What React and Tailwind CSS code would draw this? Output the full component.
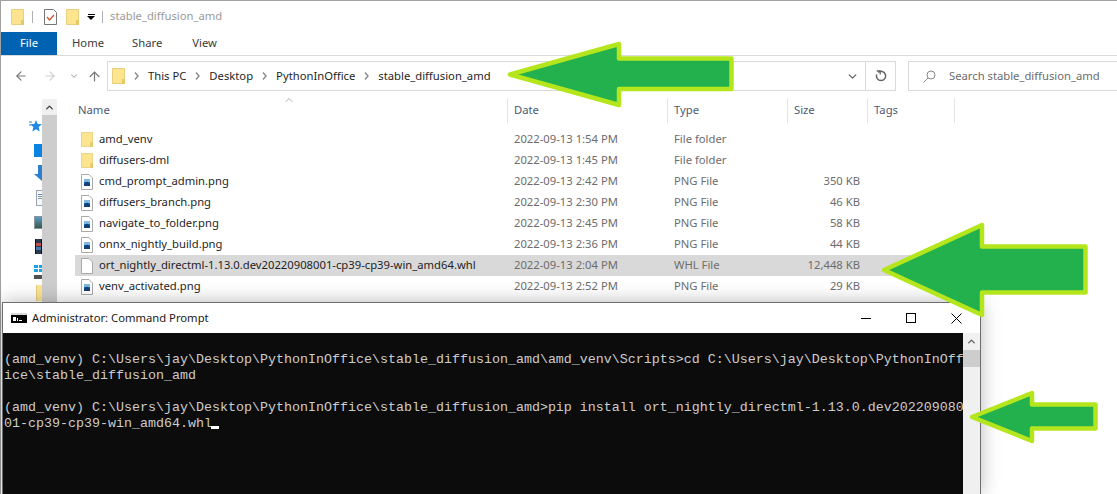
import React from 'react';
import { ArrowLeft, ArrowRight, ArrowUp, ChevronDown, ChevronUp } from 'lucide-react';

const FILES = [
  { name: 'amd_venv', date: '2022-09-13 1:54 PM', type: 'File folder', size: '', icon: 'folder' },
  { name: 'diffusers-dml', date: '2022-09-13 1:45 PM', type: 'File folder', size: '', icon: 'folder' },
  { name: 'cmd_prompt_admin.png', date: '2022-09-13 2:42 PM', type: 'PNG File', size: '350 KB', icon: 'png' },
  { name: 'diffusers_branch.png', date: '2022-09-13 2:30 PM', type: 'PNG File', size: '46 KB', icon: 'png' },
  { name: 'navigate_to_folder.png', date: '2022-09-13 2:45 PM', type: 'PNG File', size: '58 KB', icon: 'png' },
  { name: 'onnx_nightly_build.png', date: '2022-09-13 2:36 PM', type: 'PNG File', size: '44 KB', icon: 'png' },
  { name: 'ort_nightly_directml-1.13.0.dev20220908001-cp39-cp39-win_amd64.whl', date: '2022-09-13 2:04 PM', type: 'WHL File', size: '12,448 KB', icon: 'blank', selected: true },
  { name: 'venv_activated.png', date: '2022-09-13 2:52 PM', type: 'PNG File', size: '29 KB', icon: 'png' },
];

const CONSOLE = [
  ' ',
  '(amd_venv) C:\\Users\\jay\\Desktop\\PythonInOffice\\stable_diffusion_amd\\amd_venv\\Scripts>cd C:\\Users\\jay\\Desktop\\PythonInOff',
  'ice\\stable_diffusion_amd',
  ' ',
  '(amd_venv) C:\\Users\\jay\\Desktop\\PythonInOffice\\stable_diffusion_amd>pip install ort_nightly_directml-1.13.0.dev202209080',
];

function FolderIcon({ className = 'w-[13px] h-[16px]' }) {
  return (
    <svg viewBox="0 0 13 16" className={`block shrink-0 ${className}`}>
      <path d="M.5.5h12v15H.5z" fill="#fde58f" stroke="#e8cf80" />
      <path d="M10 11h3v5h-3z" fill="#e8c765" />
    </svg>
  );
}

function FileIcon({ image }) {
  return (
    <svg viewBox="0 0 12 16" className="block shrink-0 w-[12px] h-[16px]">
      <path d="M.5.5h7.5l3.5 3.5v11.500h-11z" fill="#fff" stroke="#a9a9a9" />
      {image && <path d="M3 5h6v7H3z" fill="#1565a8" />}
      {image && <path d="M3 5h6v3H3z" fill="#7fb8e0" />}
      {image && <path d="M3 10l3-2.500 3 2.500v2H3z" fill="#123f78" />}
    </svg>
  );
}

function Chevron() {
  return (
    <svg viewBox="0 0 5 8" className="block w-[5px] h-[8px] shrink-0">
      <path d="M1 .5l3 3.500-3 3.500" fill="none" stroke="#8a8a8a" strokeWidth="1.400" />
    </svg>
  );
}

function Arrow({ box, points, className, width, height }) {
  return (
    <svg viewBox={box} width={width} height={height} className={`absolute block ${className}`}>
      <polygon points={points} fill="#22b14c" stroke="#b5e61d" strokeWidth="4.500" strokeLinejoin="round" />
    </svg>
  );
}

function NavPane() {
  return (
    <div className="w-[56px] flex justify-end pt-[8px] shrink-0">
      <div className="w-[13px] h-[204px] overflow-hidden relative">
        <div className="flex flex-col items-end">
          <svg viewBox="0 0 14 14" className="block w-[14px] h-[14px] mt-[20px]">
            <path d="M8 1l1.600 4 4.400.300-3.400 2.800 1.100 4.400L8 10.200l-3.700 2.300 1.100-4.400L2 5.300l4.400-.300z" fill="#1e88e5" />
            <path d="M0 3h4M0 6h3" stroke="#1e88e5" />
          </svg>
          <div className="w-[8px] h-[13px] mt-[11px] bg-[#0a84e0]" />
          <svg viewBox="0 0 8 16" className="block w-[8px] h-[16px] mt-[8px]">
            <path d="M4 0h4v16L0 9h4z" fill="#2a7fd0" />
          </svg>
          <div className="w-[6px] h-[16px] mt-[9px] bg-[#f4f6fa] border border-[#9aa4b0] border-r-0 flex flex-col gap-px pt-[3px] pl-px">
            <div className="h-px bg-[#5a8fd0]" />
            <div className="h-px bg-[#8a96a4]" />
            <div className="h-px bg-[#8a96a4]" />
          </div>
          <div className="w-[8px] h-[13px] mt-[10px] border border-[#8a949c] border-r-0 bg-gradient-to-b from-[#5a9ac8] to-[#3a5a4a]" />
          <div className="w-[7px] h-[15px] mt-[10px] bg-[#2a3a4a] border-x border-[#111] flex flex-col justify-center gap-px">
            <div className="h-[3px] bg-[#c05050]" />
            <div className="h-[3px] bg-[#4a78b0]" />
          </div>
          <div className="w-[8px] mt-[11px] flex flex-col gap-[3px]">
            <div className="grid grid-cols-2 gap-px">
              <div className="h-[3px] bg-[#19a4ea]" />
              <div className="h-[3px] bg-[#19a4ea]" />
              <div className="h-[3px] bg-[#19a4ea]" />
              <div className="h-[3px] bg-[#19a4ea]" />
            </div>
            <div className="h-[4px] bg-[#505050]" />
          </div>
          <div className="w-[6px] h-[16px] mt-[6px] bg-[#fde58f] border-l border-[#e8cf80]" />
        </div>
      </div>
      <div className="w-[15px] flex flex-col shrink-0">
        <div className="h-[16px] bg-[#f0f0f0] flex items-center justify-center">
          <ChevronUp size={11} strokeWidth={3} color="#404040" />
        </div>
        <div className="flex-1 bg-[#cdcdcd]" />
      </div>
    </div>
  );
}

function FileList() {
  const header = 'h-[25px] flex items-center pl-[6px] border-l border-[#e5e5e5] text-[#4c5a74]';
  return (
    <div className="flex-1 pt-[7px] pl-[18px] min-w-0">
      <div className="grid grid-cols-[432px_160px_120px_80px_88px] w-[880px] text-[11.25px]">
        <div className="h-[25px] flex items-center pl-[3px] text-[#4c5a74] relative">
          Name
          <ChevronUp size={12} strokeWidth={1} color="#555" className="absolute left-[208px] -top-[4px]" />
        </div>
        <div className={header}>Date</div>
        <div className={header}>Type</div>
        <div className={header}>Size</div>
        <div className={`${header} border-r`}>Tags</div>
      </div>
      <div className="mt-[6px] w-[880px]">
        {FILES.map((f) => (
          <div
            key={f.name}
            className={`grid grid-cols-[432px_160px_120px_73px_95px] h-[21px] items-center text-[11.25px] whitespace-nowrap ${f.selected ? 'bg-[#d9d9d9]' : ''}`}
          >
            <div className="flex items-center pl-[6px] gap-[6px] text-[#1f1f1f]">
              {f.icon === 'folder' ? <FolderIcon className="w-[12px] h-[15px]" /> : <FileIcon image={f.icon === 'png'} />}
              <span>{f.name}</span>
            </div>
            <div className="pl-[7px] text-[#6d6d6d]">{f.date}</div>
            <div className="pl-[7px] text-[#6d6d6d]">{f.type}</div>
            <div className="text-right text-[#6d6d6d]">{f.size}</div>
            <div />
          </div>
        ))}
      </div>
    </div>
  );
}

function CommandPrompt() {
  return (
    <div className="absolute left-[2px] top-[302px] w-[979px] h-[192px] bg-white border border-b-0 border-[#6e6e6e] shadow-[0_0_18px_rgba(0,0,0,0.28)] flex flex-col">
      <div className="h-[30px] flex items-center shrink-0 pl-[8px] text-[11.25px] text-[#1a1a1a]">
        <div className="w-[16px] h-[10px] bg-black border-t-2 border-[#d8d8d8] flex items-end gap-px pl-[2px] pb-[2px] shrink-0">
          <div className="w-[3px] h-[4px] bg-white" />
          <div className="w-px h-[3px] bg-white" />
          <div className="w-[3px] h-px bg-white" />
        </div>
        <span className="ml-[5px]">Administrator: Command Prompt</span>
        <div className="ml-auto flex items-center pr-[18px] gap-[35px]">
          <div className="w-[10px] h-px bg-black" />
          <div className="w-[10px] h-[10px] border border-black" />
          <svg viewBox="0 0 11 11" className="block w-[11px] h-[11px]">
            <path d="M.5.5l10 10M10.500.5l-10 10" stroke="#000" />
          </svg>
        </div>
      </div>
      <div className="flex-1 flex min-h-0">
        <div className="flex-1 min-w-0 bg-[#0c0c0c] text-[#cccccc] text-[13.334px] leading-[16px] overflow-hidden pl-px pt-[3px] font-['Liberation_Mono',monospace] whitespace-pre">
          {CONSOLE.map((line, i) => (
            <div key={i} className="h-[16px]">{line}</div>
          ))}
          <div className="h-[16px] relative">
            01-cp39-cp39-win_amd64.whl
            <span className="absolute left-[207px] top-[10px] w-[8px] h-[3px] bg-white" />
          </div>
        </div>
        <div className="w-[17px] bg-[#f0f0f0] shrink-0 flex flex-col">
          <div className="h-[17px] flex items-center justify-center">
            <ChevronUp size={11} strokeWidth={3} color="#606060" />
          </div>
          <div className="h-[17px] bg-[#cdcdcd]" />
        </div>
      </div>
    </div>
  );
}

export default function App() {
  return (
    <div className="relative w-[1117px] h-[494px] overflow-hidden bg-white font-['Noto_Sans',sans-serif]">
      <div className="h-full flex flex-col border-t border-l border-[#a0a0a0]">
        {/* Title bar */}
        <div className="h-[31px] flex items-center pl-[10px] shrink-0">
          <FolderIcon />
          <div className="w-px h-[12px] bg-[#b0b0b0] ml-[8px]" />
          <svg viewBox="0 0 13 16" className="block w-[13px] h-[16px] ml-[11px]">
            <path d="M.5.5h9l3 3v12H.5z" fill="#fff" stroke="#777" />
            <path d="M3 8l2.500 3L10 6" fill="none" stroke="#d9532c" strokeWidth="1.300" />
          </svg>
          <div className="ml-[9px]"><FolderIcon /></div>
          <div className="ml-[8px] flex flex-col items-center gap-px">
            <div className="w-[7px] h-px bg-black" />
            <div className="w-0 h-0 border-x-[4px] border-x-transparent border-t-[4px] border-t-black" />
          </div>
          <div className="w-px h-[12px] bg-[#b0b0b0] ml-[7px]" />
          <span className="ml-[7px] text-[11.25px] text-[#9a9a9a]">stable_diffusion_amd</span>
        </div>

        {/* Ribbon tabs */}
        <div className="h-[24px] flex items-stretch border-b border-[#dadada] text-[11.25px] text-[#3a3a3a] shrink-0">
          <div className="w-[56px] h-[23px] bg-[#0063b1] text-white flex items-center justify-center">File</div>
          <div className="ml-[15px] flex items-center">Home</div>
          <div className="ml-[28px] flex items-center">Share</div>
          <div className="ml-[30px] flex items-center">View</div>
        </div>

        {/* Address row */}
        <div className="h-[35px] flex items-end shrink-0 pl-[13px]">
          <div className="h-[30px] flex items-center w-[93px] shrink-0">
            <ArrowLeft size={14} strokeWidth={2} color="#7a7a7a" />
            <ArrowRight size={14} strokeWidth={2} color="#cfcfcf" className="ml-[15px]" />
            <ChevronDown size={10} strokeWidth={2.500} color="#a8a8a8" className="ml-[12px]" />
            <ArrowUp size={15} strokeWidth={2} color="#7a7a7a" className="ml-[8px]" />
          </div>
          <div className="w-[789px] h-[30px] border border-[#d9d9d9] flex items-center text-[11.25px] text-[#1f1f1f] shrink-0">
            <div className="flex-1 flex items-center pl-[4px] gap-[9px]">
              <FolderIcon />
              <Chevron />
              <span>This PC</span>
              <Chevron />
              <span>Desktop</span>
              <Chevron />
              <span>PythonInOffice</span>
              <Chevron />
              <span>stable_diffusion_amd</span>
              <ChevronDown size={13} strokeWidth={2.500} color="#666" className="ml-auto mr-[6px]" />
            </div>
            <div className="w-[30px] h-full border-l border-[#d9d9d9] flex items-center justify-center shrink-0">
              <svg viewBox="0 0 12 12" className="block w-[12px] h-[12px]">
                <path d="M3.200 2.300A4.600 4.600 0 1 1 1.700 4.400" fill="none" stroke="#666" strokeWidth="1.500" />
                <path d="M1.800 1h3.400v3.400" fill="none" stroke="#666" strokeWidth="1.300" />
              </svg>
            </div>
          </div>
          <div className="ml-[12px] flex-1 h-[30px] border border-r-0 border-[#d9d9d9] flex items-center pl-[14px] text-[11.25px] text-[#6d6d6d]">
            <svg viewBox="0 0 13 13" className="block w-[13px] h-[13px] shrink-0">
              <circle cx="8" cy="5" r="4" fill="none" stroke="#8a8a8a" />
              <path d="M5 8l-4.500 4.500" stroke="#8a8a8a" />
            </svg>
            <span className="ml-[13px]">Search stable_diffusion_amd</span>
          </div>
        </div>

        {/* Content */}
        <div className="flex-1 flex min-h-0">
          <NavPane />
          <FileList />
        </div>
      </div>

      <CommandPrompt />

      {/* Annotation arrows */}
      <Arrow box="500 38 240 72" width={240} height={72} className="left-[500px] top-[38px]" points="510,74.500 619,44 619,58.500 731.500,58.500 731.500,89 619,89 619,105" />
      <Arrow box="874 218 220 104" width={220} height={104} className="left-[874px] top-[218px]" points="884,270 982,225 982,246.500 1085.500,246.500 1085.500,292.500 982,292.500 982,315" />
      <Arrow box="962 386 140 62" width={140} height={62} className="left-[962px] top-[386px]" points="972,417 1032,393 1032,404.500 1095.500,404.500 1095.500,428.500 1032,428.500 1032,441" />
    </div>
  );
}
